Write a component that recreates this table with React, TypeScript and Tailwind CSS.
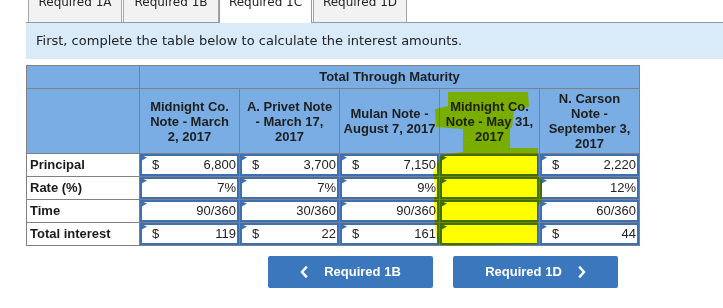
import React from 'react';

const tabs = ['Required 1A', 'Required 1B', 'Required 1C', 'Required 1D'];

const heads = [
  'Midnight Co. Note - March 2, 2017',
  'A. Privet Note - March 17, 2017',
  'Mulan Note - August 7, 2017',
  'Midnight Co. Note - May 31, 2017',
  'N. Carson Note - September 3, 2017',
];

type Col = { p: string; r: string; t: string; i: string; d: boolean };
const cols: Col[] = [
  { p: '6,800', r: '7%', t: '90/360', i: '119', d: true },
  { p: '3,700', r: '7%', t: '30/360', i: '22', d: true },
  { p: '7,150', r: '9%', t: '90/360', i: '161', d: true },
  { p: '', r: '', t: '', i: '', d: false },
  { p: '2,220', r: '12%', t: '60/360', i: '44', d: true },
];

function Flag() {
  return (
    <svg className="absolute left-[-1px] top-[-1px]" width="7" height="7" viewBox="0 0 7 7">
      <polygon points="0,0 6,2.5 0,6" fill="#3e6fb1" />
    </svg>
  );
}

function Cell({ dollar, value }: { dollar: boolean; value: string }) {
  return (
    <div className="h-[23px] border-r border-b border-[#808080] bg-white">
      <div className="relative flex h-full items-center border-2 border-[#3e6fb1] bg-white pl-[10px] pr-[1px] text-[13px] text-[#222]">
        <Flag />
        <span>{dollar ? '$' : ''}</span>
        <span className="ml-auto">{value}</span>
      </div>
    </div>
  );
}

function Label({ text }: { text: string }) {
  return (
    <div className="flex h-[23px] items-center border-r border-b border-[#808080] bg-white pl-[3px] text-[13px] font-bold text-[#1a1a1a]">
      {text}
    </div>
  );
}

function Chevron({ dir }: { dir: 'left' | 'right' }) {
  return (
    <svg width="8" height="12" viewBox="0 0 8 12">
      <polyline
        points={dir === 'left' ? '6,1.5 2,6 6,10.5' : '2,1.5 6,6 2,10.5'}
        fill="none"
        stroke="#ffffff"
        strokeWidth="2.4"
        strokeLinecap="square"
      />
    </svg>
  );
}

export default function App() {
  const rows: { label: string; key: 'p' | 'r' | 't' | 'i'; dollar: boolean }[] = [
    { label: 'Principal', key: 'p', dollar: true },
    { label: 'Rate (%)', key: 'r', dollar: false },
    { label: 'Time', key: 't', dollar: false },
    { label: 'Total interest', key: 'i', dollar: true },
  ];
  return (
    <div className="relative h-[308px] w-[723px] overflow-hidden bg-white">
      {/* tabs */}
      <div className="flex h-[22px] items-start pl-[28px] font-['DejaVu_Sans',Verdana,sans-serif] text-[12px] text-[#222]">
        {tabs.map((t, idx) => {
          const active = idx === 2;
          const w = idx === 1 ? 'w-[96px] ml-[1px]' : idx === 2 ? 'w-[93px]' : idx === 3 ? 'w-[94px] ml-[1px]' : 'w-[94px]';
          return (
            <div
              key={t}
              className={
                active
                  ? `relative z-10 flex h-[23px] justify-center border-x border-[#999] bg-white ${w}`
                  : `flex h-[22px] justify-center border-x border-[#a6a6a6] bg-[#f2f2f2] ${w}`
              }
            >
              <span className="mt-[-6px] leading-[16px] whitespace-nowrap">{t}</span>
            </div>
          );
        })}
      </div>

      {/* instruction bar */}
      <div className="ml-[26px] flex h-[37px] items-center border-t border-[#999] bg-[#d9ebf9] pl-[10px] font-['DejaVu_Sans',Verdana,sans-serif] text-[13px] text-[#222]">
        First, complete the table below to calculate the interest amounts.
      </div>

      {/* table */}
      <div className="ml-[26px] mt-[6px] grid w-[614px] grid-cols-[113px_repeat(5,100px)] border-t border-l border-[#808080] font-['Liberation_Sans',Arial,sans-serif]">
        <div className="h-[23px] border-r border-b border-[#808080] bg-[#79ade3]" />
        <div className="col-span-5 flex h-[23px] items-center justify-center border-r border-b border-[#808080] bg-[#79ade3] text-[13px] font-bold text-[#1e1e1e]">
          Total Through Maturity
        </div>
        <div className="h-[65px] border-r border-b border-[#808080] bg-[#79ade3]" />
        {heads.map((h) => (
          <div
            key={h}
            className="flex h-[65px] items-center justify-center border-r border-b border-[#808080] bg-[#79ade3] px-[3px] text-center text-[13px] font-bold leading-[15px] text-[#1e1e1e]"
          >
            {h}
          </div>
        ))}
        {rows.map((r) => (
          <React.Fragment key={r.label}>
            <Label text={r.label} />
            {cols.map((c, ci) => (
              <Cell key={ci} dollar={r.dollar && c.d} value={c[r.key]} />
            ))}
          </React.Fragment>
        ))}
      </div>

      {/* buttons */}
      <div className="ml-[268px] mt-[10px] flex gap-[20px] font-['Liberation_Sans',Arial,sans-serif] text-[13px] font-bold text-white">
        <button className="flex h-[32px] w-[165px] items-center justify-center gap-[16px] rounded-[2px] bg-[#3a77bd]">
          <Chevron dir="left" />
          <span>Required 1B</span>
        </button>
        <button className="flex h-[32px] w-[165px] items-center justify-center gap-[16px] rounded-[2px] bg-[#3a77bd]">
          <span>Required 1D</span>
          <Chevron dir="right" />
        </button>
      </div>

      {/* highlighter overlay */}
      <svg
        className="pointer-events-none absolute left-0 top-0 mix-blend-multiply"
        width="723"
        height="308"
        viewBox="0 0 723 308"
      >
        <path
          d="M448,92 L528,92 L529,107 L514,110 L512,127 L510,129 L510,148 L538,148 L538,176 L542,180 L542,200 L538,206 L537,244 L470,245 L450,246 L438,244 L435,230 L434,200 L436,190 L433,174 L437,165 L441,155 L463,152 L463,129 L436,127 L435,109 L448,106 Z"
          fill="#ffff00"
        />
      </svg>
    </div>
  );
}
